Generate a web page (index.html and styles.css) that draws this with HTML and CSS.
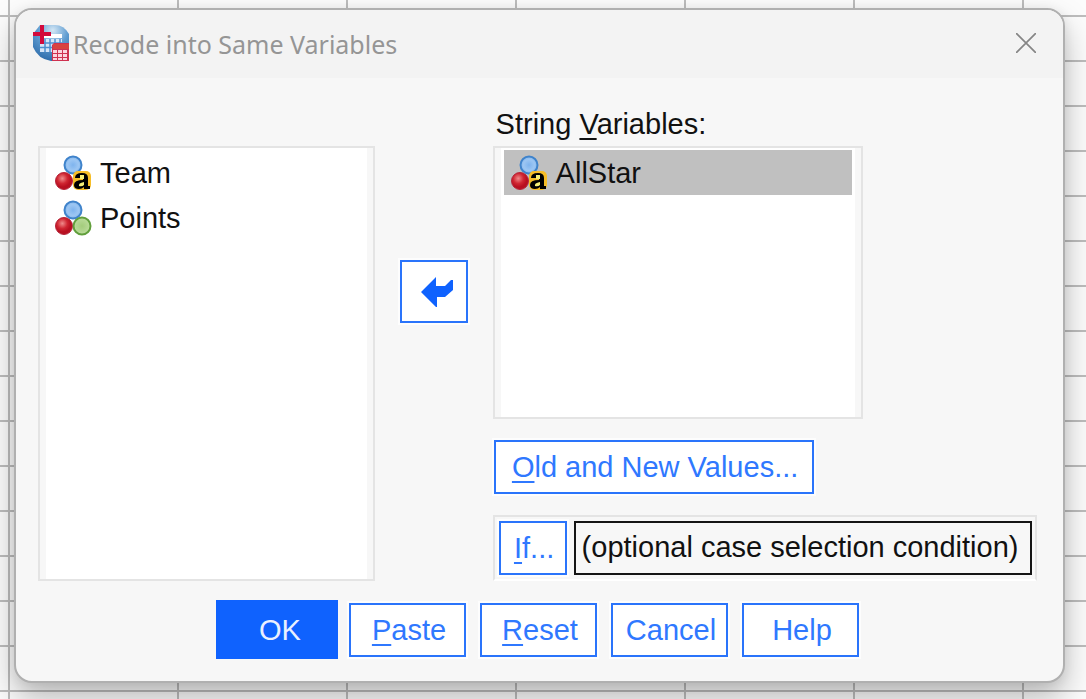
FILE: index.html
```html
<!DOCTYPE html>
<html lang="en">
<head>
<meta charset="utf-8">
<title>Recode into Same Variables</title>
<link rel="stylesheet" href="styles.css">
</head>
<body>
<svg class="defs" aria-hidden="true">
  <defs>
    <radialGradient id="blue"><stop offset="0" stop-color="#7fb4ee"/><stop offset=".65" stop-color="#9cc6f3"/><stop offset="1" stop-color="#85b6ea"/></radialGradient>
    <radialGradient id="red" cx=".4" cy=".35"><stop offset="0" stop-color="#ef8b8b"/><stop offset=".6" stop-color="#d02632"/><stop offset="1" stop-color="#b80f20"/></radialGradient>
    <radialGradient id="green"><stop offset="0" stop-color="#a3cc7c"/><stop offset="1" stop-color="#bcdc9c"/></radialGradient>
    <radialGradient id="globe" cx=".55" cy=".15" r=".85"><stop offset="0" stop-color="#d4e7f5"/><stop offset=".5" stop-color="#5d9bd0"/><stop offset="1" stop-color="#2f6dab"/></radialGradient>
    <g id="balls">
      <circle cx="18" cy="10" r="8.500" fill="url(#blue)" stroke="#3f83cb" stroke-width="2"/>
      <circle cx="9" cy="26" r="8.500" fill="url(#red)" stroke="#b5253a" stroke-width="1"/>
    </g>
    <g id="string-badge">
      <rect x="18" y="16" width="18" height="19" rx="5" fill="#f6bd27"/>
      <path d="M20 23Q20 18 27 18Q33 18 33 23V31H35V34H29V32Q27 34 24 34Q19 34 19 30Q19 25 28 25V23Q28 20 25 21V23H20Z" fill="#000"/>
      <path d="M29 27V30Q27 32 24 31Q23 28 29 27ZM25 20H29V24H25Z" fill="#f4ef78"/>
    </g>
  </defs>
</svg>
<main class="dialog" role="dialog" aria-labelledby="title">
  <header class="titlebar">
    <svg class="app-icon" viewBox="0 0 36 36" aria-hidden="true">
      <path d="M0 9V22Q5 34 18 36H36V9Q31 0 22 0H7Z" fill="url(#globe)"/>
      <path d="M11 9H29V13H11Z" fill="#fff"/>
      <path d="M7 14H29V27H7Z" fill="#d5e5f7"/>
      <path d="M7 18H29M7 22.500H29M12 14V27M17 14V27M22 14V27M27 14V27" stroke="#4d8fd0" stroke-width="1.500"/>
      <path d="M7 0H11V7H18V11H11V19H7V11H0V7H7Z" fill="#d20a3c"/>
      <path d="M19 20L21 18H36V36H19Z" fill="#cf3150"/>
      <path d="M20 19H36V24H20Z" fill="#d84340"/>
      <path d="M20 25H24V28H20ZM25 25H29V28H25ZM30 25H34V28H30ZM20 29H24V32H20ZM25 29H29V32H25ZM30 29H34V32H30ZM20 33H24V35H20ZM25 33H29V35H25ZM30 33H34V35H30Z" fill="#fbd3de"/>
    </svg>
    <h1 class="title" id="title">Recode into Same Variables</h1>
    <button class="close" type="button" aria-label="Close">
      <svg viewBox="0 0 20 20" aria-hidden="true"><path d="M0 0L20 20M20 0L0 20" stroke="#858585" stroke-width="1.700"/></svg>
    </button>
  </header>

  <section class="content">
    <ul class="list source" role="listbox" aria-label="Variables">
      <li class="item" role="option">
        <svg class="var-icon" viewBox="0 0 37 36" aria-hidden="true"><use href="#balls"/><use href="#string-badge"/></svg>
        <span>Team</span>
      </li>
      <li class="item" role="option">
        <svg class="var-icon" viewBox="0 0 37 36" aria-hidden="true"><use href="#balls"/><circle cx="27" cy="26" r="8.500" fill="url(#green)" stroke="#619f3c" stroke-width="2"/></svg>
        <span>Points</span>
      </li>
    </ul>

    <button class="button move" type="button" aria-label="Move variable">
      <svg viewBox="0 0 36 30" aria-hidden="true"><path d="M4 15L19 0V9H28L34 3H36V13L28 20H20V30H19Z" fill="#0f62fe"/></svg>
    </button>

    <h2 class="label" id="string-label">String <u>V</u>ariables:</h2>
    <ul class="list target" role="listbox" aria-labelledby="string-label">
      <li class="item selected" role="option" aria-selected="true">
        <svg class="var-icon" viewBox="0 0 37 36" aria-hidden="true"><use href="#balls"/><use href="#string-badge"/></svg>
        <span>AllStar</span>
      </li>
    </ul>

    <div class="options">
      <button class="button values" type="button"><u>O</u>ld and New Values...</button>
      <div class="condition">
        <button class="button if" type="button"><u>I</u>f...</button>
        <span class="condition-text">(optional case selection condition)</span>
      </div>
    </div>
  </section>

  <footer class="actions">
    <button class="button primary" type="button">OK</button>
    <button class="button" type="button"><u>P</u>aste</button>
    <button class="button" type="button"><u>R</u>eset</button>
    <button class="button" type="button">Cancel</button>
    <button class="button" type="button">Help</button>
  </footer>
</main>
</body>
</html>
```
FILE: styles.css
```css
* {
  box-sizing: border-box;
}

body {
  margin: 0;
  min-height: 100vh;
  padding: 8px 21px 16px 14px;
  overflow: hidden;
  font-family: "Liberation Sans", Arial, sans-serif;
  font-size: 29px;
  line-height: 36px;
  color: #111;
  background-color: #fcfcfc;
  background-image:
    linear-gradient(90deg, #bdbdbd 2px, transparent 2px),
    linear-gradient(#bdbdbd 2px, transparent 2px);
  background-size: 169px 45px;
  background-position: 8px 15px;
}

.defs {
  position: absolute;
  width: 0;
  height: 0;
}

.dialog {
  border: 2px solid #b0b0b0;
  border-radius: 18px;
  background: #f7f7f7;
  box-shadow: 0 16px 32px rgba(0, 0, 0, 0.26), 0 2px 12px rgba(0, 0, 0, 0.08);
}

.titlebar {
  display: flex;
  align-items: center;
  height: 68px;
  padding: 0 27px 2px 17px;
  border-radius: 16px 16px 0 0;
  background: #f3f3f3;
}

.app-icon {
  width: 36px;
  height: 36px;
}

.title {
  flex: 1;
  margin: 2px 0 0 4px;
  font-family: "Noto Sans", "Open Sans", sans-serif;
  font-size: 25px;
  font-weight: 400;
  color: #959595;
}

.close {
  padding: 0;
  border: 0;
  background: none;
}

.close svg {
  display: block;
  width: 20px;
  height: 20px;
}

.content {
  display: grid;
  grid-template-columns: minmax(0, 337fr) 68px minmax(0, 545fr);
  grid-template-rows: 40px 273px auto;
  column-gap: 25px;
  padding: 28px 26px 0 22px;
}

.label {
  grid-area: 1 / 3;
  margin: 0;
  padding-left: 3px;
  font-size: 29px;
  font-weight: 400;
}

u {
  text-decoration-thickness: 2px;
  text-underline-offset: 4px;
  text-decoration-skip-ink: none;
}

.list {
  margin: 0;
  list-style: none;
  border: 2px solid #e4e4e4;
  background: #fff;
  box-shadow: inset 6px 0 #f7f7f7, inset -6px 0 #f7f7f7;
}

.source {
  grid-area: 2 / 1 / 4 / 2;
  padding: 2px 8px;
}

.target {
  grid-area: 2 / 3;
  width: 68%;
  padding: 2px 9px;
}

.item {
  display: flex;
  align-items: center;
  gap: 8px;
  height: 45px;
  padding-left: 7px;
}

.selected {
  background: #c0c0c0;
}

.var-icon {
  flex: none;
  width: 37px;
  height: 36px;
}

.button {
  width: 117px;
  height: 54px;
  padding: 0 0 0 3px;
  border: 2px solid #2a74fb;
  font: inherit;
  color: #2f78ff;
  background: #fff;
  outline: 2px solid #fdfdfd;
}

.move {
  grid-area: 2 / 2;
  align-self: center;
  height: 63px;
  width: 68px;
  margin-top: 18px;
}

.move svg {
  display: block;
  width: 36px;
  height: 30px;
  margin: 0 auto;
}

.options {
  grid-area: 3 / 3;
  padding-top: 21px;
}

.values {
  display: block;
  width: 320px;
  margin-left: 1px;
}

.condition {
  display: flex;
  gap: 7px;
  margin-top: 21px;
  padding: 4px 3px 4px 4px;
  border: 2px solid #e4e4e4;
  border-bottom-color: #fff;
}

.if {
  flex: none;
  width: 68px;
}

.condition-text {
  flex: 1;
  padding: 6px 0 0 6px;
  border: 2px solid #151515;
  white-space: nowrap;
}

.actions {
  display: flex;
  justify-content: center;
  align-items: center;
  gap: 14px;
  padding: 19px 4px 22px 0;
}

.primary {
  width: 122px;
  height: 59px;
  margin-right: -3px;
  padding-left: 6px;
  border-color: #0f62fe;
  color: #e9f0ff;
  background: #0f62fe;
  outline: 0;
}
```
